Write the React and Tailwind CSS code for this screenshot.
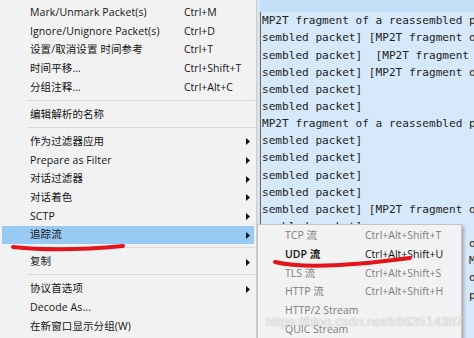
import React from "react";

const MENU_FONT = { fontFamily: '"Open Sans","Noto Sans CJK SC",sans-serif' };

const items = [
  { label: "Mark/Unmark Packet(s)", sc: "Ctrl+M" },
  { label: "Ignore/Unignore Packet(s)", sc: "Ctrl+D" },
  { label: "设置/取消设置 时间参考", sc: "Ctrl+T" },
  { label: "时间平移...", sc: "Ctrl+Shift+T" },
  { label: "分组注释...", sc: "Ctrl+Alt+C" },
  "sep",
  { label: "编辑解析的名称" },
  "sep",
  { label: "作为过滤器应用", arrow: true },
  { label: "Prepare as Filter", arrow: true },
  { label: "对话过滤器", arrow: true },
  { label: "对话着色", arrow: true },
  { label: "SCTP", arrow: true },
  { label: "追踪流", arrow: true, active: true },
  "sep",
  { label: "复制", arrow: true },
  "sep",
  { label: "协议首选项", arrow: true },
  { label: "Decode As..." },
  { label: "在新窗口显示分组(W)" },
];

const sub = [
  { label: "TCP 流", sc: "Ctrl+Alt+Shift+T", dis: true },
  { label: "UDP 流", sc: "Ctrl+Alt+Shift+U" },
  { label: "TLS 流", sc: "Ctrl+Alt+Shift+S", dis: true },
  { label: "HTTP 流", sc: "Ctrl+Alt+Shift+H", dis: true },
  { label: "HTTP/2 Stream", dis: true },
  { label: "QUIC Stream", dis: true },
];

const A = "sembled packet]";
const B = "sembled packet] [MP2T fragment of";
const C = "MP2T fragment of a reassembled p";
const rows = [
  C,
  B,
  "sembled packet]  [MP2T fragment",
  B,
  A,
  A,
  C,
  A,
  A,
  A,
  A,
  B,
  A,
  B,
  "sembled packet] [MP2T fragment M",
  B,
  "sembled packet] [MP2T fragment pp",
  A,
  A,
];

function Arrow() {
  return (
    <svg width="4" height="7" viewBox="0 0 4 7" className="block">
      <polygon points="0,0 4,3.5 0,7" fill="#111" />
    </svg>
  );
}

export default function App() {
  return (
    <div className="relative w-[474px] h-[338px] overflow-hidden bg-[#d6e9fa]">
      <div className="flex h-full">
        {/* Context menu */}
        <div
          className="w-[257px] h-full shrink-0 bg-[#f2f2f2] border-r border-[#cdcdcd] pt-[3.65px] text-[10.5px] text-[#141414]"
          style={MENU_FONT}
        >
          {items.map((it, i) =>
            it === "sep" ? (
              <div key={i} className="h-[8.3px] pt-[2.5px] pl-[27px] pr-[1px]">
                <div className="h-px bg-[#d9d9d9]" />
              </div>
            ) : (
              <div
                key={i}
                className={
                  "h-[18.7px] mx-[2px] flex items-center pl-[28px] " +
                  (it.active ? "bg-[#99caf4]" : "")
                }
              >
                <div className="w-[154px] whitespace-nowrap tracking-[0.1px]">{it.label}</div>
                <div className="flex-1 whitespace-nowrap">{it.sc || ""}</div>
                <div className="w-[4px] mr-[4px]">{it.arrow ? <Arrow /> : null}</div>
              </div>
            )
          )}
        </div>

        {/* Packet list panel */}
        <div className="flex-1 h-full flex flex-col">
          <div className="h-[15px] bg-[#c4dff7] ml-[3px]" />
          <div className="flex-1 flex">
            <div className="w-[3px] bg-[#dbe1e7]" />
            <div className="flex-1 border-l border-[#666] overflow-hidden">
              <div
                className="ml-[1px] text-[11.1px] text-[#222] whitespace-pre"
                style={{ fontFamily: '"DejaVu Sans Mono","Liberation Mono",monospace' }}
              >
                {rows.map((r, i) => (
                  <div key={i} className="h-[17.15px] leading-[17.15px]">
                    {r}
                  </div>
                ))}
              </div>
            </div>
          </div>
        </div>
      </div>

      {/* Submenu */}
      <div
        className="absolute left-[257px] top-[224px] w-[205px] h-[130px] bg-[#f2f2f2] border border-[#c4c4c4] shadow-[2px_2px_3px_rgba(0,0,0,0.25)] pt-[1.5px] text-[10.5px]"
        style={MENU_FONT}
      >
        {sub.map((it, i) => (
          <div key={i} className="h-[18.8px] flex items-center pl-[27px]">
            <div
              className={
                "w-[80px] whitespace-nowrap " + (it.dis ? "text-[#7d7d7d]" : "text-[#111] font-semibold")
              }
            >
              {it.label}
            </div>
            <div className={"whitespace-nowrap " + (it.dis ? "text-[#7d7d7d]" : "text-[#111]")}>
              {it.sc || ""}
            </div>
          </div>
        ))}
        <div
          className="absolute left-[8px] top-[87px] text-[13.4px] text-[rgba(255,255,255,0.75)] [text-shadow:0_0_1px_rgba(0,0,0,0.35)] whitespace-nowrap"
          style={{ fontFamily: '"Liberation Sans",Arial,sans-serif' }}
        >
          https://blog.csdn.net/k663514387
        </div>
      </div>

      {/* Red annotation strokes */}
      <svg className="absolute inset-0 pointer-events-none" width="474" height="338">
        <path d="M13 247 Q 60 252 123 246" stroke="#e3141b" strokeWidth="4" fill="none" strokeLinecap="round" />
        <path d="M275 262 C 300 268, 350 266, 410 258" stroke="#e3141b" strokeWidth="4" fill="none" strokeLinecap="round" />
      </svg>
    </div>
  );
}
